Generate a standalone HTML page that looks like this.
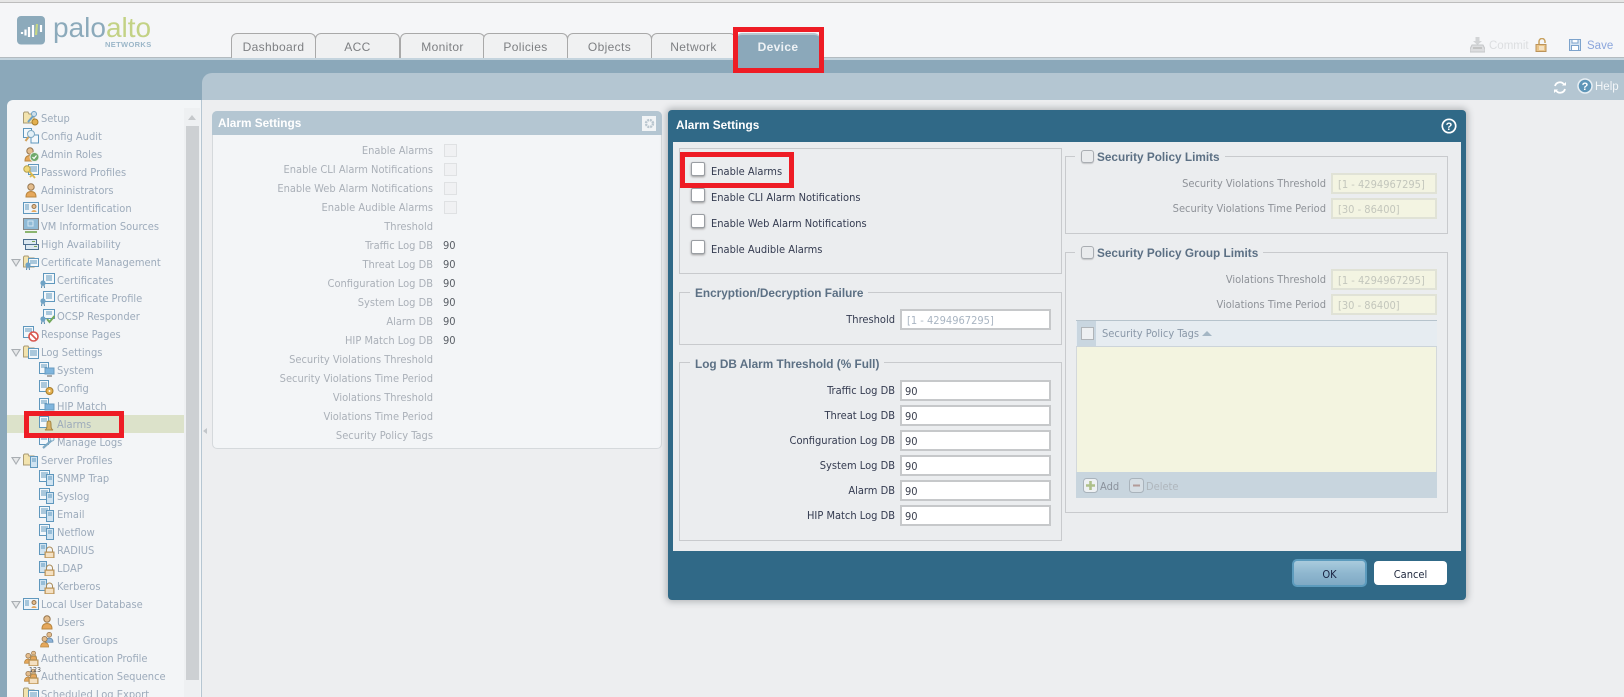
<!DOCTYPE html>
<html lang="en"><head><meta charset="utf-8"><title>Alarm Settings</title>
<style>
html{margin:0;padding:0;width:1624px;height:697px;overflow:hidden;background:#edeef0}
body{margin:0;padding:0;width:1624px;height:697px;overflow:hidden;position:relative;background:#8ba8ba;font-family:"DejaVu Sans Condensed","DejaVu Sans",sans-serif;font-stretch:condensed;font-size:11px;line-height:16px;color:#343b50}
div,span,svg{box-sizing:border-box}
.a{position:absolute}
.t{position:absolute;white-space:nowrap;line-height:16px;height:16px}
.b{font-family:"Liberation Sans",Arial,sans-serif;font-stretch:normal;font-weight:bold}
.hd{font-family:"Liberation Sans",Arial,sans-serif;font-stretch:normal;font-size:11.5px}
.tab{position:absolute;top:33px;height:25px;width:85px;background:#f0f1f2;border:1px solid #a9a9a9;border-bottom:0;border-radius:6px 6px 0 0;text-align:center;font-family:"Liberation Sans",Arial,sans-serif;font-stretch:normal;font-size:12px;line-height:26px;letter-spacing:.35px;color:#7d7f82}
#tree{position:absolute;left:7px;top:109px;width:177px;height:588px;overflow:hidden;color:#9dabbb;font-size:11px}
.r{position:relative;height:18px;line-height:20px;padding-left:34px;white-space:nowrap}
.r.l{padding-left:50px}
.r svg{position:absolute;left:16px;top:1px;width:16px;height:16px}
.r.l svg{left:32px}
.r .tri{position:absolute;left:4px;top:6px;width:0;height:0;border:5px solid transparent;border-top:8px solid #a9aeb3;border-bottom:0}
.r .tri::after{content:"";position:absolute;left:-3px;top:-7px;border:3px solid transparent;border-top:5px solid #e6e8ea;border-bottom:0}
.lb{position:absolute;width:300px;text-align:right;color:#aab0b8;white-space:nowrap;line-height:16px;height:16px;margin-top:1px}
.ck0{position:absolute;left:444px;width:13px;height:13px;background:#f0f1f3;border:1px solid #dfe1e3}
.v{position:absolute;left:443px;color:#5a5f66;line-height:16px;margin-top:1px}
.fs{position:absolute;border:1px solid #c8cacd}
.lg{position:absolute;background:#ebedef;padding:0 5px;font-family:"Liberation Sans",Arial,sans-serif;font-stretch:normal;font-weight:bold;color:#5c7084;font-size:11.8px;line-height:16px;height:16px;white-space:nowrap}
.ck{position:absolute;width:14px;height:14px;background:#fff;border:1px solid #9a9ea3;border-radius:2px;box-shadow:0 1px 2px #999}
.ck2{position:absolute;width:13px;height:13px;background:#e9ebed;border:1px solid #a9adb2;border-radius:3px;box-shadow:0 1px 1px #c4c6c8}
.dl{position:absolute;width:300px;text-align:right;line-height:16px;height:16px;white-space:nowrap;color:#343b50;margin-top:1px}
.in{position:absolute;left:900px;width:151px;height:21px;background:#fff;border:2px solid #c6c8ca;padding-left:3px;line-height:20px;color:#3d4250}
.dis{position:absolute;left:1331px;width:106px;height:21px;background:#f3f4e2;border:2px solid #e0e2d6;padding-left:5px;line-height:20px;color:#c3c6bc}
.g{color:#8e9298}
.red{position:absolute;border:5px solid #ee1c25;z-index:5}
</style></head><body>
<svg width="0" height="0" style="position:absolute">
<defs>
<g id="doc"><rect x="5.5" y=".5" width="10" height="10" fill="#f4f8fb" stroke="#5f97bd"/><path d="M7 3h7M7 5h7M7 7h7" stroke="#5f97bd"/></g>
<g id="fold"><path d="M.5 3V13H11V4H6L5 2H1.500z" fill="#f2e3ae" stroke="#a99b74"/></g>
<g id="per"><circle cx="7" cy="5" r="3.200" fill="#e4bd8d" stroke="#96764f"/><path d="M2 15c0-4 2-5.500 5-5.500s5 1.500 5 5.500z" fill="#e6a85c" stroke="#b9863f"/></g>
<g id="srv"><rect x="7.500" y="4.500" width="7" height="11" fill="#cfe3f1" stroke="#5f97bd"/><path d="M9 7h4M9 9h4" stroke="#5f97bd"/></g>
<g id="lock"><path d="M7.500 10V8a3 3 0 0 1 6 0v2" fill="none" stroke="#a98a58"/><rect x="6" y="10" width="9" height="6" fill="#e9c184" stroke="#b08e5c"/><path d="M7 12h7M7 14h7" stroke="#fff"/></g>
<g id="rib"><circle cx="4" cy="11" r="2.600" fill="#6ea2c5"/><path d="M3 13l-.5 3M5 13l.5 3" stroke="#4f86ab"/></g>
<symbol id="setup" viewBox="0 0 16 16"><use href="#fold"/><path d="M5 12l6-7" stroke="#6da0c4" stroke-width="2"/><circle cx="11" cy="4" r="2.500" fill="#cfe0ec" stroke="#6da0c4"/><circle cx="12" cy="12" r="3" fill="#e3b04f" stroke="#a97e2d"/></symbol>
<symbol id="audit" viewBox="0 0 16 16"><rect x=".5" y=".5" width="8" height="9" fill="#f4f8fb" stroke="#5f97bd"/><rect x="8" y="7" width="7.500" height="8" fill="#f4f8fb" stroke="#5f97bd"/><circle cx="8" cy="6" r="3.500" fill="#e3f0f7" stroke="#7fa9c3"/><path d="M5.500 9l-3 4" stroke="#d2a25c" stroke-width="2"/></symbol>
<symbol id="roles" viewBox="0 0 16 16"><use href="#per"/><circle cx="11.500" cy="11" r="4.500" fill="#6fa96a" stroke="#e8efe6"/><path d="M9.500 11l1.500 1.500 2.500-3" stroke="#fff" fill="none" stroke-width="1.200"/></symbol>
<symbol id="key" viewBox="0 0 16 16"><use href="#doc"/><circle cx="4" cy="5" r="3.200" fill="#f0d878" stroke="#b6a04a"/><path d="M6 7l6 7M9 11l-2 2" stroke="#d8b94e" stroke-width="1.800"/></symbol>
<symbol id="person" viewBox="0 0 16 16"><use href="#per" x="1"/></symbol>
<symbol id="idc" viewBox="0 0 16 16"><rect x=".5" y="2.500" width="15" height="11" fill="#eef4f9" stroke="#5f97bd"/><path d="M2 5h4M2 7h4M2 9h4" stroke="#5f97bd"/><circle cx="11" cy="6.500" r="2" fill="#e4bd8d" stroke="#96764f"/><path d="M8.500 12c0-2.500 5-2.500 5 0z" fill="#e6a85c"/></symbol>
<symbol id="vm" viewBox="0 0 16 16"><rect x=".5" y=".5" width="15" height="11" fill="#8fbad6" stroke="#888"/><rect x="5" y="3" width="5" height="5" fill="none" stroke="#d5e6f1"/><rect x="2" y="13" width="12" height="2" fill="#8cb56f"/></symbol>
<symbol id="ha" viewBox="0 0 16 16"><rect x=".5" y="3.500" width="13" height="5" fill="#dce8f1" stroke="#4d6f8e"/><rect x="2.500" y="8.500" width="13" height="5" fill="#dce8f1" stroke="#4d6f8e"/><path d="M9 5.500h3M11 10.500h3" stroke="#7aa55e"/></symbol>
<symbol id="certf" viewBox="0 0 16 16"><use href="#fold"/><rect x="5.500" y="4.500" width="10" height="8" fill="#f4f8fb" stroke="#5f97bd"/><path d="M7 7h7M7 9h7" stroke="#5f97bd"/><use href="#rib" x="1" y="0"/></symbol>
<symbol id="cert" viewBox="0 0 16 16"><rect x="4.500" y="1.500" width="11" height="10" fill="#f4f8fb" stroke="#5f97bd"/><path d="M7 4h6M7 6h6M7 8h6" stroke="#5f97bd"/><use href="#rib"/></symbol>
<symbol id="ocsp" viewBox="0 0 16 16"><rect x="4.500" y="1.500" width="11" height="9" fill="#f4f8fb" stroke="#5f97bd"/><path d="M7 4h6M7 6h6" stroke="#5f97bd"/><use href="#rib"/><path d="M8 11l2.500 3 5-6" fill="none" stroke="#74a95c" stroke-width="2"/></symbol>
<symbol id="resp" viewBox="0 0 16 16"><rect x=".5" y=".5" width="10" height="11" fill="#f4f8fb" stroke="#5f97bd"/><path d="M2 3h7M2 5h7" stroke="#5f97bd"/><circle cx="10.500" cy="10.500" r="4.500" fill="#fff" stroke="#d8574f" stroke-width="1.600"/><path d="M7.500 7.500l6 6" stroke="#d8574f" stroke-width="1.600"/></symbol>
<symbol id="logf" viewBox="0 0 16 16"><use href="#fold"/><rect x="5.500" y="4.500" width="10" height="10" fill="#f4f8fb" stroke="#5f97bd"/><path d="M7 7h7M7 9h7M7 11h7" stroke="#5f97bd"/></symbol>
<symbol id="sys" viewBox="0 0 16 16"><rect x=".5" y=".5" width="9" height="11" fill="#f4f8fb" stroke="#5f97bd"/><path d="M2 3h6M2 5h6" stroke="#5f97bd"/><rect x="6" y="6" width="9" height="6" fill="#7fb5dd" stroke="#6a9bc0"/><path d="M8 14h5" stroke="#aaa" stroke-width="2"/></symbol>
<symbol id="conf" viewBox="0 0 16 16"><rect x=".5" y=".5" width="9" height="11" fill="#f4f8fb" stroke="#5f97bd"/><path d="M2 3h6M2 5h6M2 7h6" stroke="#5f97bd"/><circle cx="10.500" cy="11" r="3.500" fill="#e3b04f" stroke="#a97e2d"/><circle cx="10.500" cy="11" r="1" fill="#fff"/></symbol>
<symbol id="bell" viewBox="0 0 16 16"><rect x=".5" y=".5" width="9" height="11" fill="#f4f8fb" stroke="#5f97bd"/><path d="M2 3h6M2 5h6" stroke="#5f97bd"/><path d="M6 14c2-1 2-3 2-6s1-3 2-3 2 0 2 3 0 5 2 6z" fill="#d9b264" stroke="#a58744"/></symbol>
<symbol id="mng" viewBox="0 0 16 16"><rect x=".5" y=".5" width="9" height="10" fill="#f4f8fb" stroke="#5f97bd"/><path d="M2 3h6M2 5h6" stroke="#5f97bd"/><path d="M4 14l9-8" stroke="#7fa9c3" stroke-width="2.200"/><circle cx="13" cy="5" r="2" fill="#e3f0f7" stroke="#7fa9c3"/></symbol>
<symbol id="srvf" viewBox="0 0 16 16"><use href="#fold"/><use href="#srv"/></symbol>
<symbol id="srvd" viewBox="0 0 16 16"><rect x=".5" y=".5" width="10" height="11" fill="#f4f8fb" stroke="#5f97bd"/><path d="M2 3h7M2 5h7M2 7h7" stroke="#5f97bd"/><use href="#srv"/></symbol>
<symbol id="srvl" viewBox="0 0 16 16"><rect x=".5" y="1.500" width="7" height="11" fill="#cfe3f1" stroke="#5f97bd"/><path d="M2 4h4M2 6h4" stroke="#5f97bd"/><use href="#lock"/></symbol>
<symbol id="user" viewBox="0 0 16 16"><use href="#per" x="1"/></symbol>
<symbol id="grp" viewBox="0 0 16 16"><g transform="translate(5 -1) scale(.75)"><circle cx="7" cy="5" r="3.200" fill="#e4bd8d" stroke="#96764f"/><path d="M2 15c0-4 2-5.500 5-5.500s5 1.500 5 5.500z" fill="#8eb3d8" stroke="#6089ad"/></g><g transform="translate(0 3) scale(.8)"><use href="#per"/></g></symbol>
<symbol id="auth" viewBox="0 0 16 16"><g transform="translate(6 0) scale(.65)"><use href="#per"/></g><g transform="translate(0 2) scale(.75)"><use href="#per"/></g><use href="#lock"/></symbol>
</defs></svg>

<!-- header -->
<div class="a" style="left:0;top:0;width:1624px;height:58px;background:#f5f6f8"></div>
<div class="a" style="left:0;top:2px;width:1624px;height:1px;background:#bdbdbd"></div>
<div class="a" style="left:0;top:0;width:1624px;height:2px;background:#e6e6e6"></div>
<div class="a" style="left:0;top:57px;width:1624px;height:1px;background:#b3bbc0"></div>
<div class="a" style="left:0;top:58px;width:1624px;height:2px;background:#c4d4de"></div>
<!-- logo -->
<svg class="a" style="left:17px;top:16px" width="28" height="29" viewBox="0 0 28 29"><rect width="28" height="28.500" rx="4" fill="#8caabb"/><path d="M5 16v2M8.500 13.500v6M12 11v10M16 9v12" stroke="#fff" stroke-width="2.200"/><path d="M20 8l-1 11" stroke="#c5d684" stroke-width="2.200"/><path d="M24 9v7" stroke="#fff" stroke-width="2.200"/></svg>
<div class="t" style="left:53px;top:11px;height:34px;line-height:34px;font-family:'Liberation Sans',sans-serif;font-stretch:normal;font-size:28px;color:#8caabb">palo<span style="color:#c3d285">alto</span></div>
<div class="t" style="left:105px;top:40px;height:10px;line-height:10px;font-family:'Liberation Sans',sans-serif;font-stretch:normal;font-size:7.500px;font-weight:bold;letter-spacing:.35px;color:#9bb6c8">NETWORKS</div>
<!-- tabs -->
<div class="tab" style="left:231px">Dashboard</div>
<div class="tab" style="left:315px">ACC</div>
<div class="tab" style="left:400px">Monitor</div>
<div class="tab" style="left:483px">Policies</div>
<div class="tab" style="left:567px">Objects</div>
<div class="tab" style="left:651px">Network</div>
<div class="tab" style="left:736px;width:84px;height:40px;background:#8ba8ba;border:0;border-top:2px solid #b9c7d0;color:#eef2f5;font-weight:bold;line-height:24px;font-size:12px">Device</div>
<div class="red" style="left:733px;top:27px;width:91px;height:46px"></div>
<!-- header right -->
<svg class="a" style="left:1470px;top:37px" width="15" height="16" viewBox="0 0 15 16"><path d="M5.500 0h4v4h2.500l-4.500 4-4.500-4h2.500z" fill="#d2d4d6"/><path d="M2 8h11l2 4v3H0v-3z" fill="#dcdddf" stroke="#c4c6c8"/><path d="M3 11h9" stroke="#aaa"/></svg>
<div class="t hd" style="left:1489px;top:38px;color:#dcdee0">Commit</div>
<svg class="a" style="left:1535px;top:38px" width="13" height="14" viewBox="0 0 13 14"><path d="M4 6V3.500a3 3 0 0 1 6 0V5" fill="none" stroke="#c9a25f" stroke-width="1.500"/><rect x="1" y="6.500" width="10" height="7" fill="#eac488" stroke="#bb935a"/><path d="M4 9h5M4 11h5" stroke="#fff"/></svg>
<svg class="a" style="left:1569px;top:39px" width="12" height="12" viewBox="0 0 12 12"><rect x=".5" y=".5" width="11" height="11" fill="#d6e4f2" stroke="#7da3cc"/><rect x="3" y=".5" width="6" height="3.500" fill="#fff" stroke="#7da3cc"/><rect x="2.500" y="6.500" width="7" height="5" fill="#fff" stroke="#7da3cc"/></svg>
<div class="t hd" style="left:1587px;top:38px;color:#8ba6dc">Save</div>

<!-- content -->
<div class="a" style="left:202px;top:73px;width:1422px;height:27px;background:#b4c6d2;border-radius:10px 0 0 0"></div>
<div class="a" style="left:202px;top:100px;width:1422px;height:597px;background:#edeef0"></div>
<svg class="a" style="left:1553px;top:81px" width="14" height="13" viewBox="0 0 14 13"><path d="M2 5a5 5 0 0 1 9-1.500M12 8a5 5 0 0 1-9 1.500" fill="none" stroke="#fff" stroke-width="1.800"/><path d="M9 4.500h4V1zM5 8.500H1V12z" fill="#fff"/></svg>
<svg class="a" style="left:1577px;top:78px" width="16" height="16" viewBox="0 0 16 16"><circle cx="8" cy="8" r="7" fill="#5f96b8" stroke="#e8eff4" stroke-width="1.500"/><text x="8" y="12" text-anchor="middle" font-family="Liberation Sans" font-weight="bold" font-size="11" fill="#fff">?</text></svg>
<div class="t hd" style="left:1595px;top:79px;color:#f3f6f8">Help</div>

<!-- left panel -->
<div class="a" style="left:7px;top:100px;width:195px;height:597px;background:#f3f5f7;border-radius:6px 0 0 0;border-right:1px solid #b6c6d2"></div>
<div class="a" style="left:184px;top:108px;width:16px;height:589px;background:#eef0f2"></div>
<div class="a" style="left:186px;top:126px;width:13px;height:554px;background:#cdd0d3"></div>
<div class="a" style="left:188px;top:115px;border:4px solid transparent;border-top:0;border-bottom:5px solid #c5c8cb"></div>
<div class="a" style="left:203px;top:428px;border:3px solid transparent;border-left:0;border-right:4px solid #c2c6ca"></div>
<div class="a" style="left:7px;top:415px;width:177px;height:18px;background:#dce2ca"></div>
<div id="tree">
<div class="r"><svg><use href="#setup"/></svg>Setup</div>
<div class="r"><svg><use href="#audit"/></svg>Config Audit</div>
<div class="r"><svg><use href="#roles"/></svg>Admin Roles</div>
<div class="r"><svg><use href="#key"/></svg>Password Profiles</div>
<div class="r"><svg><use href="#person"/></svg>Administrators</div>
<div class="r"><svg><use href="#idc"/></svg>User Identification</div>
<div class="r"><svg><use href="#vm"/></svg>VM Information Sources</div>
<div class="r"><svg><use href="#ha"/></svg>High Availability</div>
<div class="r"><i class="tri"></i><svg><use href="#certf"/></svg>Certificate Management</div>
<div class="r l"><svg><use href="#cert"/></svg>Certificates</div>
<div class="r l"><svg><use href="#cert"/></svg>Certificate Profile</div>
<div class="r l"><svg><use href="#ocsp"/></svg>OCSP Responder</div>
<div class="r"><svg><use href="#resp"/></svg>Response Pages</div>
<div class="r"><i class="tri"></i><svg><use href="#logf"/></svg>Log Settings</div>
<div class="r l"><svg><use href="#sys"/></svg>System</div>
<div class="r l"><svg><use href="#conf"/></svg>Config</div>
<div class="r l"><svg><use href="#sys"/></svg>HIP Match</div>
<div class="r l"><svg><use href="#bell"/></svg>Alarms</div>
<div class="r l"><svg><use href="#mng"/></svg>Manage Logs</div>
<div class="r"><i class="tri"></i><svg><use href="#srvf"/></svg>Server Profiles</div>
<div class="r l"><svg><use href="#srvd"/></svg>SNMP Trap</div>
<div class="r l"><svg><use href="#srvd"/></svg>Syslog</div>
<div class="r l"><svg><use href="#srvd"/></svg>Email</div>
<div class="r l"><svg><use href="#srvd"/></svg>Netflow</div>
<div class="r l"><svg><use href="#srvl"/></svg>RADIUS</div>
<div class="r l"><svg><use href="#srvl"/></svg>LDAP</div>
<div class="r l"><svg><use href="#srvl"/></svg>Kerberos</div>
<div class="r"><i class="tri"></i><svg><use href="#idc"/></svg>Local User Database</div>
<div class="r l"><svg><use href="#user"/></svg>Users</div>
<div class="r l"><svg><use href="#grp"/></svg>User Groups</div>
<div class="r"><svg><use href="#auth"/></svg>Authentication Profile</div>
<div class="r"><svg><use href="#auth"/></svg><span class="a" style="left:22px;top:-1px;font-size:7px;line-height:9px;color:#555">123</span>Authentication Sequence</div>
<div class="r"><svg><use href="#logf"/></svg>Scheduled Log Export</div>
</div>
<div class="red" style="left:24px;top:411px;width:100px;height:27px"></div>

<!-- background panel -->
<div class="a" style="left:212px;top:111px;width:450px;height:338px;background:#f3f5f7;border:1px solid #d5d9dc;border-radius:5px;overflow:hidden"></div>
<div class="a" style="left:212px;top:111px;width:450px;height:24px;background:#b4c6d2;border-radius:5px 5px 0 0"></div>
<div class="t b" style="left:218px;top:115px;color:#fff;font-size:11.8px">Alarm Settings</div>
<div class="a" style="left:642px;top:116px;width:14px;height:15px;background:#f1f4f6"></div>
<svg class="a" style="left:644px;top:118px" width="11" height="11" viewBox="0 0 11 11"><circle cx="5.500" cy="5.500" r="3.500" fill="none" stroke="#b9c6cf" stroke-width="2.400" stroke-dasharray="2 .8"/></svg>

<div class="lb" style="left:133px;top:142px">Enable Alarms</div><div class="ck0" style="top:144px"></div>
<div class="lb" style="left:133px;top:161px">Enable CLI Alarm Notifications</div><div class="ck0" style="top:163px"></div>
<div class="lb" style="left:133px;top:180px">Enable Web Alarm Notifications</div><div class="ck0" style="top:182px"></div>
<div class="lb" style="left:133px;top:199px">Enable Audible Alarms</div><div class="ck0" style="top:201px"></div>
<div class="lb" style="left:133px;top:218px">Threshold</div>
<div class="lb" style="left:133px;top:237px">Traffic Log DB</div><div class="v" style="top:237px">90</div>
<div class="lb" style="left:133px;top:256px">Threat Log DB</div><div class="v" style="top:256px">90</div>
<div class="lb" style="left:133px;top:275px">Configuration Log DB</div><div class="v" style="top:275px">90</div>
<div class="lb" style="left:133px;top:294px">System Log DB</div><div class="v" style="top:294px">90</div>
<div class="lb" style="left:133px;top:313px">Alarm DB</div><div class="v" style="top:313px">90</div>
<div class="lb" style="left:133px;top:332px">HIP Match Log DB</div><div class="v" style="top:332px">90</div>
<div class="lb" style="left:133px;top:351px">Security Violations Threshold</div>
<div class="lb" style="left:133px;top:370px">Security Violations Time Period</div>
<div class="lb" style="left:133px;top:389px">Violations Threshold</div>
<div class="lb" style="left:133px;top:408px">Violations Time Period</div>
<div class="lb" style="left:133px;top:427px">Security Policy Tags</div>

<!-- dialog -->
<div class="a" style="left:668px;top:110px;width:798px;height:490px;background:#306987;border-radius:4px;box-shadow:0 0 7px 2px #b4b7ba"></div>
<div class="a" style="left:673px;top:142px;width:788px;height:409px;background:#ebedef"></div>
<div class="t b" style="left:676px;top:117px;color:#fff;font-size:11.8px">Alarm Settings</div>
<svg class="a" style="left:1441px;top:118px" width="16" height="16" viewBox="0 0 16 16"><circle cx="8" cy="8" r="6.700" fill="#306987" stroke="#fff" stroke-width="1.700"/><text x="8" y="12" text-anchor="middle" font-family="Liberation Sans" font-weight="bold" font-size="11" fill="#fff">?</text></svg>

<div class="fs" style="left:679px;top:148px;width:383px;height:126px"></div>
<div class="ck" style="left:691px;top:162px"></div><div class="t" style="left:711px;top:164px">Enable Alarms</div>
<div class="ck" style="left:691px;top:188px"></div><div class="t" style="left:711px;top:190px">Enable CLI Alarm Notifications</div>
<div class="ck" style="left:691px;top:214px"></div><div class="t" style="left:711px;top:216px">Enable Web Alarm Notifications</div>
<div class="ck" style="left:691px;top:240px"></div><div class="t" style="left:711px;top:242px">Enable Audible Alarms</div>
<div class="red" style="left:680px;top:152px;width:114px;height:36px"></div>

<div class="fs" style="left:679px;top:292px;width:383px;height:53px"></div>
<div class="lg" style="left:690px;top:285px">Encryption/Decryption Failure</div>
<div class="dl" style="left:595px;top:311px">Threshold</div>
<div class="in" style="top:309px;color:#a9b5c2;padding-left:5px">[1 - 4294967295]</div>

<div class="fs" style="left:679px;top:362px;width:383px;height:179px"></div>
<div class="lg" style="left:690px;top:356px">Log DB Alarm Threshold (% Full)</div>
<div class="dl" style="left:595px;top:382px">Traffic Log DB</div><div class="in" style="top:380px">90</div>
<div class="dl" style="left:595px;top:407px">Threat Log DB</div><div class="in" style="top:405px">90</div>
<div class="dl" style="left:595px;top:432px">Configuration Log DB</div><div class="in" style="top:430px">90</div>
<div class="dl" style="left:595px;top:457px">System Log DB</div><div class="in" style="top:455px">90</div>
<div class="dl" style="left:595px;top:482px">Alarm DB</div><div class="in" style="top:480px">90</div>
<div class="dl" style="left:595px;top:507px">HIP Match Log DB</div><div class="in" style="top:505px">90</div>

<div class="fs" style="left:1065px;top:156px;width:383px;height:78px"></div>
<div class="lg" style="left:1075px;top:149px;width:22px;padding:0"></div>
<div class="ck2" style="left:1081px;top:150px"></div>
<div class="lg" style="left:1097px;top:149px;padding:0 5px 0 0">Security Policy Limits</div>
<div class="dl g" style="left:1026px;top:175px">Security Violations Threshold</div><div class="dis" style="top:173px">[1 - 4294967295]</div>
<div class="dl g" style="left:1026px;top:200px">Security Violations Time Period</div><div class="dis" style="top:198px">[30 - 86400]</div>

<div class="fs" style="left:1065px;top:252px;width:383px;height:261px"></div>
<div class="lg" style="left:1075px;top:245px;width:22px;padding:0"></div>
<div class="ck2" style="left:1081px;top:246px"></div>
<div class="lg" style="left:1097px;top:245px;padding:0 5px 0 0">Security Policy Group Limits</div>
<div class="dl g" style="left:1026px;top:271px">Violations Threshold</div><div class="dis" style="top:269px">[1 - 4294967295]</div>
<div class="dl g" style="left:1026px;top:296px">Violations Time Period</div><div class="dis" style="top:294px">[30 - 86400]</div>

<div class="a" style="left:1076px;top:320px;width:361px;height:178px;background:#f3f4e0;border:1px solid #d3d8db;border-top:0"></div>
<div class="a" style="left:1076px;top:320px;width:361px;height:27px;background:#e6ecf1;border-top:1px solid #b6c3cc;border-bottom:1px solid #ccd4da"></div>
<div class="a" style="left:1077px;top:321px;width:19px;height:25px;background:#c9d6e0"></div>
<div class="a" style="left:1081px;top:327px;width:13px;height:13px;background:#eef0f2;border:1px solid #b0b4b8"></div>
<div class="t" style="left:1102px;top:326px;color:#8a98a8">Security Policy Tags</div>
<div class="a" style="left:1202px;top:331px;border:5px solid transparent;border-top:0;border-bottom:5px solid #a4b6c4"></div>
<div class="a" style="left:1076px;top:472px;width:361px;height:26px;background:#c8d5de"></div>
<svg class="a" style="left:1083px;top:478px" width="15" height="15" viewBox="0 0 15 15"><rect x=".5" y=".5" width="14" height="14" rx="3" fill="#eef1f3" stroke="#a9b3bb"/><path d="M7.500 3v9M3 7.500h9" stroke="#aec08a" stroke-width="2.600"/></svg>
<div class="t" style="left:1100px;top:479px;color:#8b929c">Add</div>
<svg class="a" style="left:1129px;top:478px" width="15" height="15" viewBox="0 0 15 15"><rect x=".5" y=".5" width="14" height="14" rx="3" fill="#d6dee4" stroke="#a9b3bb"/><path d="M4 7.500h7" stroke="#b39b98" stroke-width="2"/></svg>
<div class="t" style="left:1146px;top:479px;color:#afb6bc">Delete</div>

<div class="a" style="left:1292px;top:559px;width:75px;height:28px;background:linear-gradient(#a9cbdd,#8fb7cf 50%,#7fa9c4);border:2px solid #5c9bbd;border-radius:5px;text-align:center;line-height:27px;color:#1b2444">OK</div>
<div class="a" style="left:1374px;top:561px;width:73px;height:24px;background:#fff;border-radius:4px;text-align:center;line-height:27px;color:#222b40">Cancel</div>
</body></html>
